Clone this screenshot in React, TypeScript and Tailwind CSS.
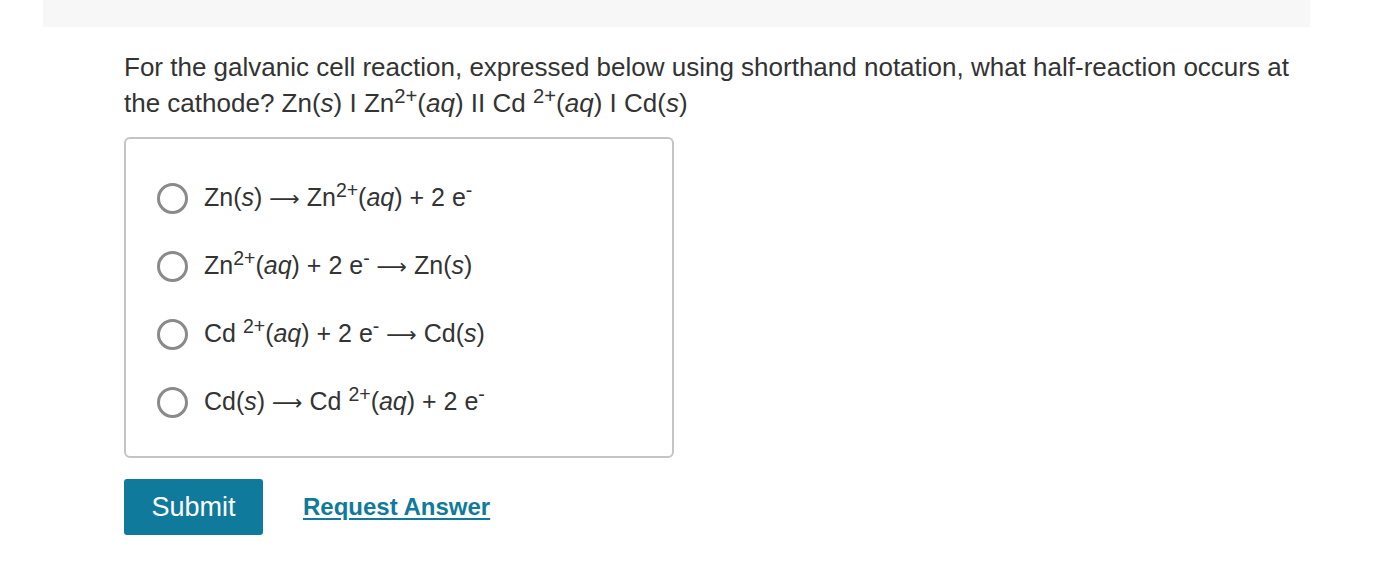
import React from "react";

const Sup = ({ children }: { children: React.ReactNode }) => (
  <sup className="text-[0.78em] top-[-0.45em]">{children}</sup>
);

const Arr = () => (
  <span style={{ fontFamily: '"DejaVu Sans", sans-serif' }} className="text-[0.85em]">
    ⟶
  </span>
);

const options: React.ReactNode[] = [
  <>
    Zn(<i>s</i>) <Arr /> Zn<Sup>2+</Sup>(<i>aq</i>) + 2 e<Sup>-</Sup>
  </>,
  <>
    Zn<Sup>2+</Sup>(<i>aq</i>) + 2 e<Sup>-</Sup> <Arr /> Zn(<i>s</i>)
  </>,
  <>
    Cd <Sup>2+</Sup>(<i>aq</i>) + 2 e<Sup>-</Sup> <Arr /> Cd(<i>s</i>)
  </>,
  <>
    Cd(<i>s</i>) <Arr /> Cd <Sup>2+</Sup>(<i>aq</i>) + 2 e<Sup>-</Sup>
  </>,
];

export default function App() {
  return (
    <div
      className="w-[1374px] h-[570px] bg-white text-[#333333]"
      style={{ fontFamily: '"Liberation Sans", Arial, sans-serif' }}
    >
      <div className="ml-[43px] w-[1267px] h-[27px] bg-[#f7f7f7]" />
      <div className="pl-[124px] pt-[22px]">
        <p className="text-[26px] leading-[36px] w-[1190px]">
          For the galvanic cell reaction, expressed below using shorthand notation, what half-reaction occurs at
          the cathode? Zn(<i>s</i>) I Zn<Sup>2+</Sup>(<i>aq</i>) II Cd <Sup>2+</Sup>(<i>aq</i>) I Cd(<i>s</i>)
        </p>
        <div className="mt-[16px] w-[550px] h-[321px] border-2 border-[#c4c4c4] rounded-[6px] pt-[43px] pl-[31px] flex flex-col gap-[36px]">
          {options.map((o, i) => (
            <label key={i} className="flex items-center h-[32px]">
              <span className="w-[31px] h-[31px] rounded-full border-[3px] border-[#8a8a8a] shrink-0" />
              <span className="ml-[16px] text-[25px] leading-[32px] whitespace-nowrap">{o}</span>
            </label>
          ))}
        </div>
        <div className="mt-[21px] flex items-center">
          <button className="w-[139px] h-[56px] rounded-[3px] bg-[#107a9c] text-white text-[27px]">
            Submit
          </button>
          <a className="ml-[40px] text-[24px] font-bold text-[#107a9c] underline underline-offset-[3px] cursor-pointer">
            Request Answer
          </a>
        </div>
      </div>
    </div>
  );
}
